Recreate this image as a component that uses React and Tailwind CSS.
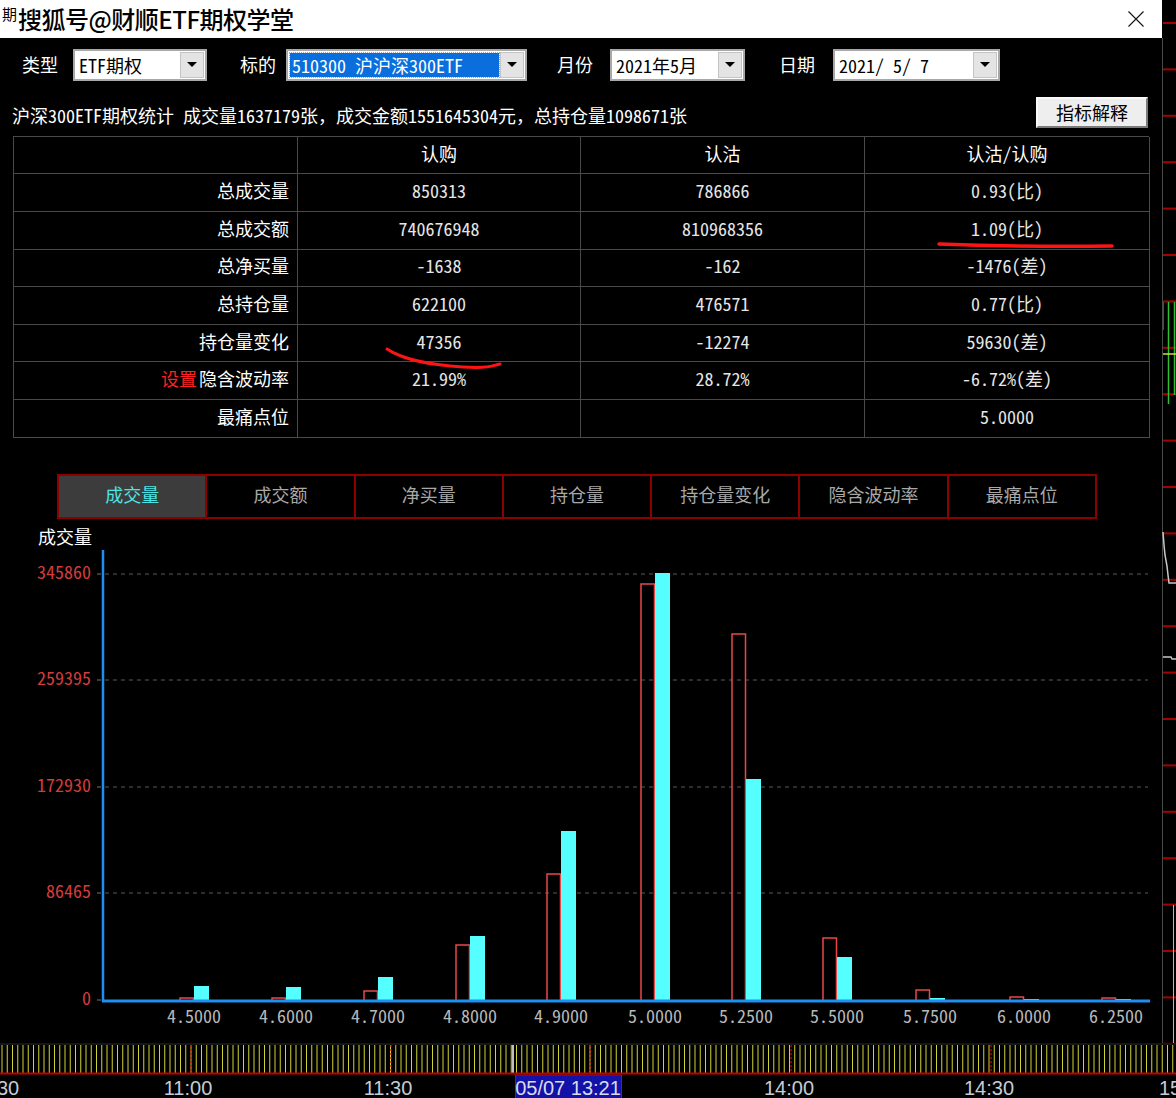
import React from 'react';

const ROWS = [
  ['总成交量', '850313', '786866', '0.93(比)'],
  ['总成交额', '740676948', '810968356', '1.09(比)'],
  ['总净买量', '-1638', '-162', '-1476(差)'],
  ['总持仓量', '622100', '476571', '0.77(比)'],
  ['持仓量变化', '47356', '-12274', '59630(差)'],
  ['隐含波动率', '21.99%', '28.72%', '-6.72%(差)'],
  ['最痛点位', '', '', '5.0000'],
];

const TABS = ['成交量', '成交额', '净买量', '持仓量', '持仓量变化', '隐含波动率', '最痛点位'];

// x = limite entre la barre rouge (认购) et la barre cyan (认沽), r/c = haut à l'écran
const BARS = [
  { x: 194, r: 997, c: 985, label: '4.5000' },
  { x: 286, r: 997, c: 986, label: '4.6000' },
  { x: 378, r: 990, c: 976, label: '4.7000' },
  { x: 470, r: 944, c: 935, label: '4.8000' },
  { x: 561, r: 873, c: 830, label: '4.9000' },
  { x: 655, r: 583, c: 572, label: '5.0000' },
  { x: 746, r: 633, c: 778, label: '5.2500' },
  { x: 837, r: 937, c: 956, label: '5.5000' },
  { x: 930, r: 989, c: 997, label: '5.7500' },
  { x: 1024, r: 996, c: 998, label: '6.0000' },
  { x: 1116, r: 997, c: 998, label: '6.2500' },
];

const GRID = [
  { y: 573, label: '345860' },
  { y: 679, label: '259395' },
  { y: 786, label: '172930' },
  { y: 892, label: '86465' },
];

const TOP = 549;
const BASE = 1000;

function Combo({ className, children, selected }) {
  return (
    <div className={`flex h-[32px] items-stretch border-2 border-[#a8a8a8] bg-white p-[1px] ${className}`}>
      {selected ? (
        <div className="m-[1px] flex flex-1 items-center bg-[#0a6fdc] pl-[2px] text-[18px] leading-none text-white outline-1 outline-dotted outline-[#e0a040]">
          {children}
        </div>
      ) : (
        <div className="flex flex-1 items-center pl-[3px] text-[18px] leading-none text-black">{children}</div>
      )}
      <div className="flex w-[24px] items-center justify-center border border-[#c4c4c4] bg-[#e4e4e4]">
        <span className="h-0 w-0 border-x-[5px] border-t-[5px] border-x-transparent border-t-black" />
      </div>
    </div>
  );
}

function Chart() {
  return (
    <svg width="1162" height="494" className="block">
      {GRID.map((g) => (
        <g key={g.label}>
          <line x1="105" y1={g.y - TOP} x2="1148" y2={g.y - TOP} stroke="#5a5a5a" strokeDasharray="4 4" />
          <line x1="97" y1={g.y - TOP} x2="101" y2={g.y - TOP} stroke="#777" />
          <text x="91" y={g.y - TOP + 5} textAnchor="end" fill="#d23c3c" fontSize="18">
            {g.label}
          </text>
        </g>
      ))}
      <line x1="97" y1={BASE - TOP - 1} x2="101" y2={BASE - TOP - 1} stroke="#777" />
      <text x="91" y={BASE - TOP + 4} textAnchor="end" fill="#d23c3c" fontSize="18">0</text>

      {BARS.map((b) => (
        <g key={b.label}>
          <rect x={b.x - 14} y={b.r - TOP} width="13.5" height={BASE - b.r} fill="none" stroke="#e84848" strokeWidth="1.5" />
          <rect x={b.x} y={b.c - TOP} width="15" height={BASE - b.c} fill="#55ffff" />
          <text x={b.x} y={1022 - TOP} textAnchor="middle" fill="#b8b8b8" fontSize="18">
            {b.label}
          </text>
        </g>
      ))}

      <line x1="103" y1="0" x2="103" y2={BASE - TOP + 1} stroke="#1e8ff0" strokeWidth="2.5" />
      <line x1="102" y1={BASE - TOP} x2="1150" y2={BASE - TOP} stroke="#1e8ff0" strokeWidth="3" />
    </svg>
  );
}

function SideStrip() {
  const ticks = [];
  for (let i = 0; i < 23; i++) ticks.push(23 + i * 46.4);
  return (
    <svg width="14" height="1043" className="block">
      <line x1="0.5" y1="38" x2="0.5" y2="1043" stroke="#4a4a4a" />
      {ticks.map((y) => (
        <line key={y} x1="1" y1={y} x2="14" y2={y} stroke="#a80000" strokeWidth="2" />
      ))}
      <line x1="1.5" y1="302" x2="1.5" y2="330" stroke="#1f6a1f" />
      <line x1="6.5" y1="302" x2="6.5" y2="404" stroke="#2fbf2f" strokeWidth="1.5" />
      <line x1="12.5" y1="302" x2="12.5" y2="395" stroke="#2fbf2f" strokeWidth="1.5" />
      <line x1="1" y1="354" x2="14" y2="354" stroke="#d8d848" strokeWidth="1.5" />
      <polyline points="1,532 2,545 3,555 5,566 6,575 7,583 14,583" fill="none" stroke="#c8c8c8" strokeWidth="1.5" />
      <polyline points="1,657 9,657 10,659 14,659" fill="none" stroke="#c8c8c8" strokeWidth="1.5" />
      <line x1="11.5" y1="905" x2="11.5" y2="1043" stroke="#c8c828" />
    </svg>
  );
}

function Timeline() {
  const ticks = [];
  for (let x = 2; x < 1176; x += 5.25) ticks.push(x);
  const labels = [
    { x: 188, t: '11:00' },
    { x: 388, t: '11:30' },
    { x: 789, t: '14:00' },
    { x: 989, t: '14:30' },
  ];
  return (
    <svg width="1176" height="55" className="block font-['Liberation_Sans_Narrow','Liberation_Sans',sans-serif]">
      <line x1="0" y1="1" x2="1176" y2="1" stroke="#2c2c2c" />
      {ticks.map((x) => (
        <line key={x} x1={x} y1="2" x2={x} y2="30" stroke="#d2d232" strokeWidth="1" />
      ))}
      {[191, 391, 590, 791, 991].map((x) => (
        <line key={x} x1={x} y1="2" x2={x} y2="30" stroke="#e00000" strokeDasharray="2 2" strokeWidth="1.2" />
      ))}
      <line x1="513" y1="2" x2="513" y2="30" stroke="#ffffff" strokeWidth="1.5" />
      <line x1="0" y1="30.5" x2="1176" y2="30.5" stroke="#c00000" strokeWidth="2" />
      <text x="-3" y="52" fill="#c4ccd6" fontSize="20">30</text>
      {labels.map((l) => (
        <text key={l.t} x={l.x} y="52" textAnchor="middle" fill="#c4ccd6" fontSize="20">
          {l.t}
        </text>
      ))}
      <rect x="515.5" y="32" width="106" height="24" fill="#1212a8" stroke="#d00000" />
      <text x="568" y="52" textAnchor="middle" fill="#d8dce8" fontSize="20">05/07 13:21</text>
      <text x="1159" y="52" fill="#c4ccd6" fontSize="20">15</text>
    </svg>
  );
}

export default function App() {
  return (
    <div className="flex h-[1098px] w-[1176px] flex-col overflow-hidden bg-black font-['Noto_Sans_Mono_CJK_SC','Noto_Sans_CJK_SC',monospace] text-[#eeeeee]">
      <div className="flex h-[1043px]">
        <div className="flex w-[1162px] flex-col">
          {/* barre de titre */}
          <div className="flex h-[38px] items-center bg-white pr-[18px] text-black">
            <span className="ml-[2px] self-start pt-[6px] text-[15px] leading-none">期</span>
            <span className="ml-[1px] font-['Noto_Sans_CJK_SC',sans-serif] text-[24px] font-medium leading-none tracking-[-0.5px]">
              搜狐号@财顺ETF期权学堂
            </span>
            <svg width="16" height="16" className="ml-auto" viewBox="0 0 16 16">
              <path d="M0.5 0.5 L15.5 15.5 M15.5 0.5 L0.5 15.5" stroke="#111" strokeWidth="1.1" fill="none" />
            </svg>
          </div>

          {/* filtres */}
          <div className="flex h-[54px] items-center pl-[22px] text-[18px]">
            <span className="w-[36px] text-white">类型</span>
            <Combo className="ml-[15px] w-[134px]">ETF期权</Combo>
            <span className="ml-[33px] w-[37px] text-white">标的</span>
            <Combo className="ml-[9px] w-[241px]" selected>510300 沪沪深300ETF</Combo>
            <span className="ml-[30px] w-[37px] text-white">月份</span>
            <Combo className="ml-[16px] w-[135px]">2021年5月</Combo>
            <span className="ml-[34px] w-[37px] text-white">日期</span>
            <Combo className="ml-[17px] w-[167px]">2021/ 5/ 7</Combo>
          </div>

          {/* résumé */}
          <div className="mt-[5px] flex h-[31px] items-start pl-[12px] pr-[14px]">
            <span className="pt-[7px] text-[18px] leading-[22px] text-white">
              沪深300ETF期权统计 成交量1637179张，成交金额1551645304元，总持仓量1098671张
            </span>
            <button className="ml-auto h-[31px] w-[112px] border-2 border-b-[#7a7a7a] border-l-[#fafafa] border-r-[#7a7a7a] border-t-[#fafafa] bg-[#eeeeee] text-[18px] leading-none text-black">
              指标解释
            </button>
          </div>

          {/* tableau */}
          <div className="relative ml-[13px] mt-[8px] w-[1136px]">
            <div className="grid grid-cols-[284px_283px_284px_285px] border-l border-t border-[#4a4a4a] text-[18px]">
              <div className="h-[37.6px] border-b border-r border-[#4a4a4a]" />
              {['认购', '认沽', '认沽/认购'].map((h) => (
                <div key={h} className="flex h-[37.6px] items-center justify-center border-b border-r border-[#4a4a4a] pb-[4px] text-white">
                  {h}
                </div>
              ))}
              {ROWS.map((r) => (
                <React.Fragment key={r[0]}>
                  <div className="flex h-[37.6px] items-center justify-end border-b border-r border-[#4a4a4a] pb-[4px] pr-[8px] text-white">
                    {r[0] === '隐含波动率' && <span className="mr-[2px] text-[#ff2020]">设置</span>}
                    {r[0]}
                  </div>
                  {r.slice(1).map((v, i) => (
                    <div key={i} className="flex h-[37.6px] items-center justify-center border-b border-r border-[#4a4a4a] pb-[4px] text-[#e6e6e6]">
                      {v}
                    </div>
                  ))}
                </React.Fragment>
              ))}
            </div>
            <svg className="pointer-events-none absolute inset-0" width="1136" height="302">
              <path d="M926 108 Q 1010 111 1099 110" stroke="#ff1414" strokeWidth="3.5" strokeLinecap="round" fill="none" />
              <path d="M374 213 C 392 225, 420 229, 450 231 S 480 229, 487 228" stroke="#ff1414" strokeWidth="3" strokeLinecap="round" fill="none" />
            </svg>
          </div>

          {/* onglets */}
          <div className="ml-[57px] mt-[36px] flex h-[45px] w-[1040px] border-2 border-[#8c0000] text-[18px]">
            {TABS.map((t, i) => (
              <div
                key={t}
                className={`flex flex-1 items-center justify-center pb-[3px] ${i < TABS.length - 1 ? 'border-r-2 border-[#8c0000]' : ''} ${i === 0 ? 'bg-[#3c3c3c] text-[#4ce4e4]' : 'text-[#a8a8a8]'}`}
              >
                {t}
              </div>
            ))}
          </div>

          <div className="h-[31px] pl-[38px] pt-[5px] text-[18px] leading-[24px] text-white">成交量</div>
          <Chart />
        </div>
        <SideStrip />
      </div>
      <Timeline />
    </div>
  );
}
